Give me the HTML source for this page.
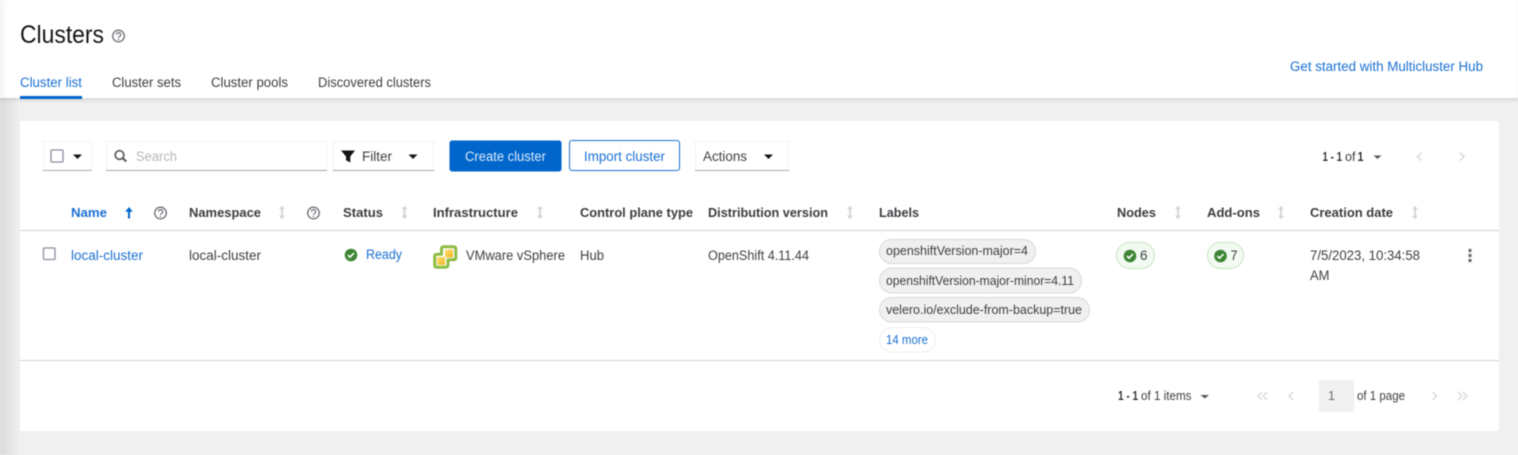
<!DOCTYPE html>
<html><head><meta charset="utf-8"><title>Clusters</title>
<style>
html,body{margin:0;padding:0;width:1518px;height:455px;overflow:hidden;background:#f0f0f0}
svg{display:block;filter:blur(.45px)}
text{font-family:"Liberation Sans",sans-serif;font-size:13.5px;fill:#3c3f42}
.b{font-weight:700;font-size:13px;fill:#3a3d40}
.l{fill:#1a70d2}
.n{font-size:12.5px;fill:#3c3f42}
.nb{font-size:12.5px;font-weight:700;fill:#2f3235}
</style></head><body>
<svg width="1518" height="455" viewBox="0 0 1518 455" xmlns="http://www.w3.org/2000/svg">
<defs>
<linearGradient id="ls" x1="0" x2="1" y1="0" y2="0"><stop offset="0" stop-color="#000" stop-opacity=".09"/><stop offset="1" stop-color="#000" stop-opacity="0"/></linearGradient>
<linearGradient id="hs" x1="0" x2="0" y1="0" y2="1"><stop offset="0" stop-color="#000" stop-opacity=".1"/><stop offset="1" stop-color="#000" stop-opacity="0"/></linearGradient>
<linearGradient id="ys" x1="0" x2="1" y1="0" y2="1"><stop offset="0" stop-color="#fbe07a"/><stop offset="1" stop-color="#f3b71c"/></linearGradient>
<g id="sort"><path d="M0 -6.5L3 -3.2H.9V3.2H3L0 6.500L-3 3.2H-.9V-3.2H-3Z" fill="#d2d2d2"/></g>
<g id="q"><circle r="5.800" fill="none" stroke="#6a6e73" stroke-width="1.300"/><path d="M-2 -1.300A2.050 2.050 0 1 1 1 .5Q0 1 0 1.800" fill="none" stroke="#6a6e73" stroke-width="1.200"/><circle cy="3.400" r=".75" fill="#6a6e73"/></g>
<g id="ok"><circle r="6.300" fill="#3e8635"/><path d="M-3 0L-1 2.200L3 -2" fill="none" stroke="#fff" stroke-width="1.600"/></g>
</defs>

<rect width="1518" height="455" fill="#f0f0f0"/>
<rect width="1518" height="98" fill="#fff"/>
<rect y="98" width="1518" height="5" fill="url(#hs)"/>
<rect x="0" y="98" width="20" height="357" fill="url(#ls)"/>
<rect x="0" y="0" width="8" height="98" fill="url(#ls)" opacity=".45"/>

<text x="20" y="43" style="font-size:25px;fill:#151515" textLength="84" lengthAdjust="spacingAndGlyphs">Clusters</text>
<use href="#q" x="118.500" y="36"/>
<text x="20" y="87" class="l" textLength="62" lengthAdjust="spacingAndGlyphs">Cluster list</text>
<rect x="20" y="96" width="62" height="3" fill="#0066cc"/>
<text x="112" y="87" textLength="69" lengthAdjust="spacingAndGlyphs">Cluster sets</text>
<text x="211" y="87" textLength="77" lengthAdjust="spacingAndGlyphs">Cluster pools</text>
<text x="318" y="87" textLength="113" lengthAdjust="spacingAndGlyphs">Discovered clusters</text>
<text x="1290" y="71" class="l" textLength="193" lengthAdjust="spacingAndGlyphs">Get started with Multicluster Hub</text>

<rect x="20" y="121" width="1479" height="310" fill="#fff"/>

<!-- toolbar -->
<g fill="none" stroke="#f3f3f3"><rect x="43.500" y="141.500" width="48" height="29"/><rect x="106.500" y="141.500" width="220" height="29"/><rect x="333.500" y="141.500" width="100" height="29"/><rect x="695.500" y="141.500" width="93" height="29"/></g>
<g stroke="#a4a7aa"><path d="M43 170.500H92M106 170.500H327M333 170.500H434M695 170.500H789"/></g>
<rect x="51" y="150" width="12" height="12" rx="1" fill="#fff" stroke="#8b8d9a" stroke-width="1.300"/>
<path d="M73 154.500H82L77.500 159Z" fill="#151515"/>
<circle cx="119.500" cy="155" r="4.300" fill="none" stroke="#55585c" stroke-width="1.700"/><path d="M122.500 158L126.300 161.500" stroke="#55585c" stroke-width="2"/>
<text x="136" y="161" style="fill:#b5b7b9" textLength="41" lengthAdjust="spacingAndGlyphs">Search</text>
<path d="M341 150.500H355L350.300 156.500V162.500L346 160.300V156.500Z" fill="#151515"/>
<text x="362" y="161" textLength="30" lengthAdjust="spacingAndGlyphs">Filter</text>
<path d="M408.500 154.500H417.500L413 159Z" fill="#151515"/>
<rect x="449.500" y="140.500" width="112" height="31" rx="2.500" fill="#0066cc"/>
<text x="465" y="161" style="fill:#dce9f8" textLength="81" lengthAdjust="spacingAndGlyphs">Create cluster</text>
<rect x="569.500" y="140.500" width="110" height="30" rx="2.500" fill="#fff" stroke="#1a70d2"/>
<text x="584" y="161" class="l" textLength="81" lengthAdjust="spacingAndGlyphs">Import cluster</text>
<text x="703" y="161" textLength="44" lengthAdjust="spacingAndGlyphs">Actions</text>
<path d="M764 154.500H773L768.500 159Z" fill="#151515"/>
<text x="1322.500" y="161" class="nb" textLength="19.500" lengthAdjust="spacingAndGlyphs">1 - 1</text>
<text x="1345" y="161" class="n" textLength="10.500" lengthAdjust="spacingAndGlyphs">of</text>
<text x="1357.500" y="161" class="nb" textLength="6" lengthAdjust="spacingAndGlyphs">1</text>
<path d="M1373.500 155.500H1381.500L1377.500 159Z" fill="#55585c"/>
<path d="M1421.500 152.500L1417.500 156.500L1421.500 160.500M1460 152.500L1464 156.500L1460 160.500" fill="none" stroke="#d8d8d8" stroke-width="1.500"/>

<!-- header -->
<text x="71" y="217" class="b l" textLength="36" lengthAdjust="spacingAndGlyphs">Name</text>
<path d="M129 207L132.800 211.800H130V218.500H128V211.800H125.200Z" fill="#0066cc"/>
<use href="#q" x="160.500" y="213"/>
<text x="189" y="217" class="b" textLength="72" lengthAdjust="spacingAndGlyphs">Namespace</text>
<use href="#sort" x="282" y="212.500"/>
<use href="#q" x="313.500" y="213"/>
<text x="343" y="217" class="b" textLength="40" lengthAdjust="spacingAndGlyphs">Status</text>
<use href="#sort" x="404.500" y="212.500"/>
<text x="433" y="217" class="b" textLength="85" lengthAdjust="spacingAndGlyphs">Infrastructure</text>
<use href="#sort" x="540" y="212.500"/>
<text x="580" y="217" class="b" textLength="113" lengthAdjust="spacingAndGlyphs">Control plane type</text>
<text x="708" y="217" class="b" textLength="120" lengthAdjust="spacingAndGlyphs">Distribution version</text>
<use href="#sort" x="850" y="212.500"/>
<text x="879" y="217" class="b" textLength="40" lengthAdjust="spacingAndGlyphs">Labels</text>
<text x="1117" y="217" class="b" textLength="39" lengthAdjust="spacingAndGlyphs">Nodes</text>
<use href="#sort" x="1178" y="212.500"/>
<text x="1207" y="217" class="b" textLength="53" lengthAdjust="spacingAndGlyphs">Add-ons</text>
<use href="#sort" x="1281" y="212.500"/>
<text x="1310" y="217" class="b" textLength="83" lengthAdjust="spacingAndGlyphs">Creation date</text>
<use href="#sort" x="1415" y="212.500"/>
<path d="M20 230.500H1499M20 360.500H1499" stroke="#d2d2d2"/>

<!-- row -->
<rect x="43.500" y="248" width="11.500" height="11.500" rx="1" fill="#fff" stroke="#8b8d9a" stroke-width="1.300"/>
<text x="71" y="260" class="l" textLength="72" lengthAdjust="spacingAndGlyphs">local-cluster</text>
<text x="189" y="260" textLength="72" lengthAdjust="spacingAndGlyphs">local-cluster</text>
<use href="#ok" x="351" y="255"/>
<text x="366" y="259" class="l" textLength="36" lengthAdjust="spacingAndGlyphs">Ready</text>
<!-- vsphere -->
<path d="M444 246.800H453.500Q455.800 246.800 455.800 249V257.500Q455.800 259.800 453.500 259.800H448V264.500Q448 267.200 445.500 267.200H437Q434.700 267.200 434.700 265V256.500Q434.700 254.300 437 254.300H441.500V249Q441.500 246.800 444 246.800Z" fill="#fff" stroke="#8cbd45" stroke-width="3" stroke-linejoin="round"/>
<rect x="445" y="249.500" width="8" height="8" rx="1" fill="url(#ys)"/>
<rect x="437" y="257" width="8" height="8" rx="1" fill="url(#ys)"/>
<text x="466" y="260" textLength="99" lengthAdjust="spacingAndGlyphs">VMware vSphere</text>
<text x="580" y="260" textLength="24" lengthAdjust="spacingAndGlyphs">Hub</text>
<text x="708" y="260" textLength="101" lengthAdjust="spacingAndGlyphs">OpenShift 4.11.44</text>

<g fill="#f0f0f0" stroke="#d8d8d8">
<rect x="879.500" y="239.500" width="156" height="24" rx="12"/>
<rect x="879.500" y="268" width="202" height="25" rx="12.500"/>
<rect x="879.500" y="297.500" width="210" height="24.500" rx="12.250"/>
</g>
<rect x="879.500" y="327.500" width="56" height="24.500" rx="12.250" fill="#fff" stroke="#f0f0f0"/>
<text x="886" y="255" style="font-size:12.500px" textLength="142" lengthAdjust="spacingAndGlyphs">openshiftVersion-major=4</text>
<text x="886" y="285" style="font-size:12.500px" textLength="188" lengthAdjust="spacingAndGlyphs">openshiftVersion-major-minor=4.11</text>
<text x="886" y="314" style="font-size:12.500px" textLength="196" lengthAdjust="spacingAndGlyphs">velero.io/exclude-from-backup=true</text>
<text x="886" y="344" class="l" style="font-size:12.500px" textLength="42" lengthAdjust="spacingAndGlyphs">14 more</text>

<rect x="1116.500" y="242.500" width="38" height="26" rx="13" fill="#f3faf2" stroke="#c4e6bd"/>
<use href="#ok" x="1130" y="256"/>
<text x="1140" y="260" textLength="7.500" lengthAdjust="spacingAndGlyphs">6</text>
<rect x="1207.500" y="242.500" width="36" height="26" rx="13" fill="#f3faf2" stroke="#c4e6bd"/>
<use href="#ok" x="1220.500" y="256"/>
<text x="1230.500" y="260" textLength="7" lengthAdjust="spacingAndGlyphs">7</text>
<text x="1310" y="260" textLength="110" lengthAdjust="spacingAndGlyphs">7/5/2023, 10:34:58</text>
<text x="1310" y="280" textLength="19.500" lengthAdjust="spacingAndGlyphs">AM</text>
<g fill="#6a6e73"><circle cx="1470" cy="250.500" r="1.700"/><circle cx="1470" cy="255.500" r="1.700"/><circle cx="1470" cy="260.500" r="1.700"/></g>

<!-- footer -->
<text x="1118" y="400" class="nb" textLength="20" lengthAdjust="spacingAndGlyphs">1 - 1</text>
<text x="1141" y="400" class="n" textLength="50.500" lengthAdjust="spacingAndGlyphs">of 1 items</text>
<path d="M1200.500 395H1209L1204.750 398.500Z" fill="#55585c"/>
<path d="M1262 392L1258 396L1262 400M1267 392L1263 396L1267 400M1293 392L1289 396L1293 400M1432.500 392L1436.500 396L1432.500 400M1458 392L1462 396L1458 400M1463 392L1467 396L1463 400" fill="none" stroke="#d8d8d8" stroke-width="1.400"/>
<rect x="1319" y="380" width="35" height="32" fill="#f0f0f0"/>
<text x="1328" y="400" class="n" style="fill:#6a6e73">1</text>
<text x="1357" y="400" class="n" textLength="48" lengthAdjust="spacingAndGlyphs">of 1 page</text>
</svg>
</body></html>
